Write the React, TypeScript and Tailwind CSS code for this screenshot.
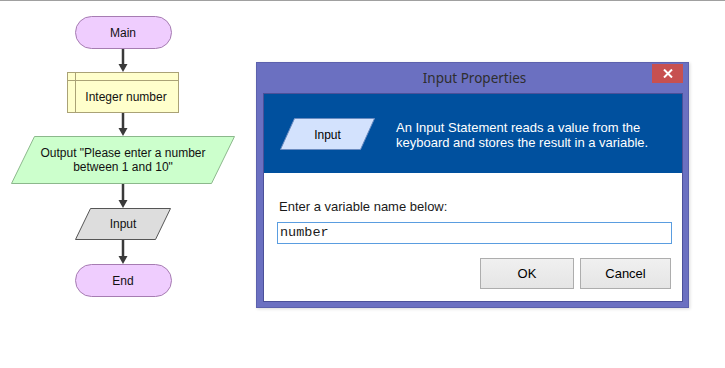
import React from "react";

const arial = { fontFamily: '"Liberation Sans", Arial, sans-serif' };

function Arrow({ h }: { h: number }) {
  return (
    <svg width="12" height={h} viewBox={`0 0 12 ${h}`} className="block">
      <line x1="6" y1="0" x2="6" y2={h - 7} stroke="#3a3a3a" strokeWidth="2.5" />
      <polygon points={`1.5,${h - 8} 10.5,${h - 8} 6,${h}`} fill="#3a3a3a" />
    </svg>
  );
}

function Terminal({ label }: { label: string }) {
  return (
    <div className="flex h-[33px] w-[97px] items-center justify-center rounded-full border border-[#a67cb2] bg-[#efcdfe] text-[12px] text-[#111]">
      {label}
    </div>
  );
}

// parallelogram drawn as svg, label sits on top of it
function Slanted({
  w,
  h,
  skew,
  fill,
  stroke,
  children,
}: {
  w: number;
  h: number;
  skew: number;
  fill: string;
  stroke: string;
  children: React.ReactNode;
}) {
  return (
    <div className="relative flex items-center justify-center" style={{ width: w, height: h }}>
      <svg width={w} height={h} className="absolute inset-0">
        <polygon
          points={`${skew + 0.5},0.5 ${w - 0.5},0.5 ${w - skew - 0.5},${h - 0.5} 0.5,${h - 0.5}`}
          fill={fill}
          stroke={stroke}
        />
      </svg>
      <div className="relative text-center">{children}</div>
    </div>
  );
}

function Flowchart() {
  return (
    <div className="flex w-[246px] flex-col items-center pt-[15px] text-[12px] text-[#111]" style={arial}>
      <Terminal label="Main" />
      <Arrow h={23} />
      <div className="grid h-[41px] w-[112px] grid-cols-[8px_1fr] grid-rows-[8px_1fr] border border-[#aaa276] bg-[#ffffcc]">
        <div className="border-b border-r border-[#aaa276]" />
        <div className="border-b border-[#aaa276]" />
        <div className="border-r border-[#aaa276]" />
        <div className="flex items-center justify-center pr-[2px]">Integer number</div>
      </div>
      <Arrow h={23} />
      <Slanted w={224} h={48} skew={23} fill="#ccffcc" stroke="#8cb88c">
        <div className="leading-[14px]">
          Output "Please enter a number
          <br />
          between 1 and 10"
        </div>
      </Slanted>
      <Arrow h={24} />
      <Slanted w={96} h={32} skew={15} fill="#dddddd" stroke="#555555">
        Input
      </Slanted>
      <Arrow h={24} />
      <Terminal label="End" />
    </div>
  );
}

function InputPropertiesDialog() {
  return (
    <div className="ml-[10px] mt-[61px] flex h-[246px] w-[433px] flex-col border border-[#5c61ad] bg-[#6b70c1] pb-[5px] pl-[6px] pr-[5px] shadow-[1px_1px_3px_rgba(0,0,0,0.15)]">
      <div className="grid h-[30px] grid-cols-[1fr_auto_1fr] items-center">
        <div />
        <div
          className="pl-[3px] pt-[1px] text-[13.5px] text-[#2e2e2e]"
          style={{ fontFamily: '"Noto Sans", "Open Sans", sans-serif' }}
        >
          Input Properties
        </div>
        <div className="flex h-full items-start justify-end">
          <div className="mt-[1px] flex h-[19px] w-[31px] items-center justify-center bg-[#c75050]">
            <svg width="10" height="9" viewBox="0 0 10 9">
              <path d="M1 0.5 L9 8.5 M9 0.5 L1 8.5" stroke="#fff" strokeWidth="2" />
            </svg>
          </div>
        </div>
      </div>

      <div className="flex flex-1 flex-col border border-[#4b5099] bg-white" style={arial}>
        <div className="flex h-[79px] items-center bg-[#00509e] pl-[16px]">
          <Slanted w={95} h={32} skew={14} fill="#d3e2fd" stroke="#6a8bc0">
            <span className="text-[12px] text-black">Input</span>
          </Slanted>
          <p className="ml-[21px] mt-[2px] text-[13px] leading-[15px] text-white">
            An Input Statement reads a value from the
            <br />
            keyboard and stores the result in a variable.
          </p>
        </div>

        <div className="flex flex-col pl-[13px] pr-[10px] pt-[26px]">
          <label className="pl-[2px] text-[13px] leading-[15px] text-[#1a1a1a]">
            Enter a variable name below:
          </label>
          <div className="mt-[8px] flex h-[22px] w-[395px] items-center border border-[#5a9de0] bg-white pl-[2px] pt-[1px]">
            <span
              className="text-[13.5px] text-[#1a1a1a]"
              style={{ fontFamily: '"Liberation Mono", "Courier New", monospace' }}
            >
              number
            </span>
          </div>
          <div className="mt-[14px] flex justify-end gap-[6px] pr-[1px]">
            <button className="h-[31px] w-[94px] border border-[#adadad] bg-gradient-to-b from-[#f0f0f0] to-[#e5e5e5] text-[13px] text-black">
              OK
            </button>
            <button className="h-[31px] w-[91px] border border-[#adadad] bg-gradient-to-b from-[#f0f0f0] to-[#e5e5e5] text-[13px] text-black">
              Cancel
            </button>
          </div>
        </div>
      </div>
    </div>
  );
}

export default function App() {
  return (
    <div className="flex h-[368px] w-[725px] items-start overflow-hidden border-t border-[#a0a0a0] bg-white">
      <Flowchart />
      <InputPropertiesDialog />
    </div>
  );
}
